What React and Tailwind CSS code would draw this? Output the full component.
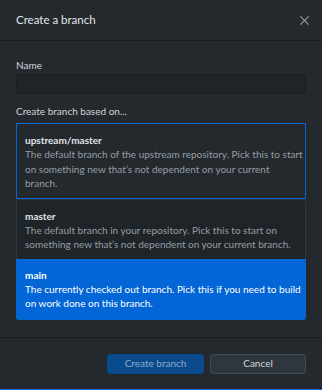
import React from 'react';

const branches = [
  {
    name: 'upstream/master',
    desc: [
      'The default branch of the upstream repository. Pick this to start on something new that\u2019s not dependent on your current',
      'branch.',
    ],
  },
  {
    name: 'master',
    desc: ['The default branch in your repository. Pick this to start on something new that\u2019s not dependent on your current branch.'],
  },
  {
    name: 'main',
    desc: ['The currently checked out branch. Pick this if you need to build on work done on this branch.'],
  },
];

function Desc({ lines, className }) {
  return (
    <div className={`text-[10px] leading-[14.5px] ${className}`}>
      {lines.map((l, i) => (
        <React.Fragment key={i}>
          {i > 0 && <br />}
          {l}
        </React.Fragment>
      ))}
    </div>
  );
}

export default function App() {
  return (
    <div
      className="w-[322px] h-[390px] bg-[#24292e] text-[#d1d5da] flex flex-col"
      style={{ fontFamily: 'Lato, "Noto Sans", sans-serif' }}
    >
      {/* Header */}
      <div className="h-[41px] flex items-center justify-between pl-4 pr-[12px] border-b border-[#1b1f23]">
        <h3 className="text-[11.5px] text-[#e1e4e8]">Create a branch</h3>
        <svg width="11" height="11" viewBox="0 0 12 12" className="text-[#959da5]">
          <path d="M1.5 1.5 L10.5 10.5 M10.5 1.5 L1.5 10.5" stroke="currentColor" strokeWidth="1.3" />
        </svg>
      </div>

      {/* Body */}
      <div className="flex-1 px-4 pt-[17px]">
        <label className="block text-[10px] leading-[14px] text-[#d1d5da]">Name</label>
        <div className="mt-[2px] h-[20px] rounded-[3px] bg-[#1f2428] border border-[#1b1f23]" />

        <div className="mt-[10px] text-[10px] leading-[14px]">Create branch based on...</div>

        <div className="mt-[5px] flex flex-col">
          <div className="border border-[#0366d6] pl-2 pr-0 pt-[9px] pb-[7px]">
            <div className="text-[10px] leading-[14px] font-bold text-[#e1e4e8]">{branches[0].name}</div>
            <Desc lines={branches[0].desc} className="text-[#959da5]" />
          </div>
          <div className="bg-[#1f2428] border border-[#2f363d] border-b-0 rounded-t-[3px] pl-2 pr-1 pt-[9px] pb-[7px]">
            <div className="text-[10px] leading-[14px] font-bold text-[#e1e4e8]">{branches[1].name}</div>
            <Desc lines={branches[1].desc} className="text-[#959da5]" />
          </div>
          <div className="bg-[#0366d6] rounded-b-[3px] pl-[9px] pr-[5px] pt-[9px] pb-[9px]">
            <div className="text-[10px] leading-[14px] font-bold text-white">{branches[2].name}</div>
            <Desc lines={branches[2].desc} className="text-white" />
          </div>
        </div>
      </div>

      {/* Footer */}
      <div className="h-[52px] border-t border-[#1b1f23] flex items-center justify-end gap-[6px] px-4">
        <button className="w-[97px] h-[20px] rounded-[3px] bg-[#0a4b8e] text-[10px] text-[#8ea9c6]">
          Create branch
        </button>
        <button className="w-[96px] h-[20px] rounded-[3px] bg-[#2f363d] border border-[#444d56] text-[10px] text-[#d1d5da]">
          Cancel
        </button>
      </div>
      <div className="h-[1px] bg-[#0366d6]" />
    </div>
  );
}
